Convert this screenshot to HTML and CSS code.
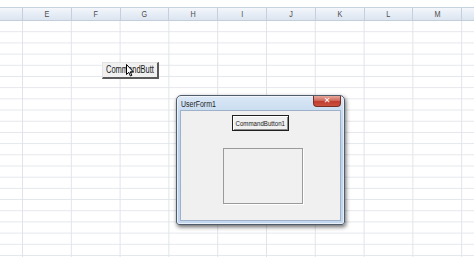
FILE: index.html
```html
<!DOCTYPE html>
<html>
<head>
<meta charset="utf-8">
<link rel="stylesheet" href="styles.css">
</head>
<body>
<div class="sheet">
  <div class="colhead">
    <div class="col part"></div>
    <div class="col"><span>E</span></div>
    <div class="col"><span>F</span></div>
    <div class="col"><span>G</span></div>
    <div class="col"><span>H</span></div>
    <div class="col"><span>I</span></div>
    <div class="col"><span>J</span></div>
    <div class="col"><span>K</span></div>
    <div class="col"><span>L</span></div>
    <div class="col"><span>M</span></div>
    <div class="col"></div>
  </div>
  <div class="grid"></div>

  <div class="xl-btn"><span class="txt">CommandButt</span></div>
  <svg class="cursor" width="8" height="13" viewBox="0 0 8 13"><path d="M0.5 0.5 L0.5 10.5 L2.8 8.3 L4.4 12 L5.8 11.4 L4.3 7.8 L7.3 7.8 Z" fill="#fff" stroke="#000" stroke-width="1" stroke-linejoin="round"/></svg>

  <div class="userform">
    <div class="uf-title">
      <span class="uf-name">UserForm1</span>
      <div class="uf-close"><span>✕</span></div>
    </div>
    <div class="uf-client">
      <div class="uf-btn"><span class="txt">CommandButton1</span></div>
      <div class="uf-frame"></div>
    </div>
  </div>
</div>
</body>
</html>
```

FILE: styles.css
```css
html, body {
  margin: 0;
  padding: 0;
  background: #fff;
  overflow: hidden;
}
body {
  width: 474px;
  height: 257px;
  font-family: "Liberation Sans", Arial, sans-serif;
}
.sheet {
  position: relative;
  height: 257px;
  padding-top: 7px;
  box-sizing: border-box;
  display: flex;
  flex-direction: column;
  overflow: hidden;
}
.colhead {
  display: flex;
  height: 14px;
  box-sizing: border-box;
  border-top: 1px solid #c5d2e0;
  border-bottom: 1px solid #c3cedb;
  background: linear-gradient(#f4f7fb, #e6edf6 50%, #dce5f0);
  flex: none;
}
.col {
  flex: none;
  width: 48.8px;
  box-sizing: border-box;
  border-left: 1px solid #c6d0dc;
  display: flex;
  align-items: center;
  justify-content: center;
  font-size: 8.5px;
  color: #4d4d4d;
}
.col span {
  display: inline-block;
  transform: scaleX(.85);
}
.col.part {
  width: 22px;
  border-left: none;
}
.grid {
  flex: 1;
  background-image:
    linear-gradient(to right, #e0e4ea 0, #e0e4ea 1px, transparent 1px),
    linear-gradient(to bottom, transparent 0, transparent 10.2px, #e3e6eb 10.2px, #e3e6eb 11.2px);
  background-size: 48.8px 100%, 100% 11.2px;
  background-position: 22px 0, 0 0;
}

.txt {
  display: inline-block;
  white-space: nowrap;
}

.xl-btn {
  position: absolute;
  left: 102px;
  top: 62px;
  width: 57px;
  height: 17px;
  box-sizing: border-box;
  background: #f0f0f0;
  border-top: 1px solid #e3e3e3;
  border-left: 1px solid #e3e3e3;
  border-right: 2px solid #5a5a5a;
  border-bottom: 2px solid #5a5a5a;
  overflow: hidden;
  font-size: 10px;
  color: #1a1a1a;
  line-height: 14px;
  padding-left: 3px;
}
.xl-btn .txt {
  transform: scaleX(.75);
  transform-origin: left center;
}
.cursor {
  position: absolute;
  left: 126px;
  top: 64px;
}

.userform {
  position: absolute;
  left: 176px;
  top: 95px;
  width: 169px;
  height: 130px;
  box-sizing: border-box;
  border: 1px solid #4f5c6b;
  border-radius: 5px 5px 3px 3px;
  background: linear-gradient(#dbe8f6, #c9dcf0 12%, #bcd3ec 40%, #c3d8ef);
  box-shadow: 1px 2px 4px rgba(0, 0, 0, .6), inset 0 0 0 1px rgba(255, 255, 255, .6);
  padding: 0 3px 3px 3px;
  display: flex;
  flex-direction: column;
}
.uf-title {
  height: 14px;
  flex: none;
  display: flex;
  justify-content: space-between;
  align-items: flex-start;
}
.uf-name {
  display: inline-block;
  font-size: 8.5px;
  color: #1e1e1e;
  margin-top: 3px;
  margin-left: 1px;
  transform: scaleX(.82);
  transform-origin: left center;
  white-space: nowrap;
}
.uf-close {
  width: 28px;
  height: 11px;
  box-sizing: border-box;
  margin-right: 0;
  border: 1px solid #7a2d25;
  border-top: none;
  border-radius: 0 0 4px 4px;
  background: linear-gradient(#e7a89c, #d06a5c 45%, #c13c2e 55%, #c9513f);
  display: flex;
  align-items: center;
  justify-content: center;
  color: #fff;
  font-size: 8px;
  font-weight: bold;
  line-height: 1;
  font-family: "DejaVu Sans", sans-serif;
}
.uf-client {
  flex: 1;
  position: relative;
  background: #f0f0f0;
  border: 1px solid #9eb1c8;
}
.uf-btn {
  position: absolute;
  left: 51px;
  top: 4px;
  width: 57px;
  height: 16px;
  box-sizing: border-box;
  border: 1px solid #1f1f1f;
  box-shadow: inset 1px 1px 0 #fff, inset -1px -1px 0 #8a8a8a;
  background: #f0f0f0;
  display: flex;
  align-items: center;
  justify-content: center;
  font-size: 7.5px;
  color: #1a1a1a;
  overflow: hidden;
}
.uf-btn .txt {
  transform: scaleX(.82);
}
.uf-frame {
  position: absolute;
  left: 42px;
  top: 37px;
  width: 80px;
  height: 56px;
  box-sizing: border-box;
  border: 1px solid #9a9a9a;
  box-shadow: 1px 1px 0 #fff;
}
```
